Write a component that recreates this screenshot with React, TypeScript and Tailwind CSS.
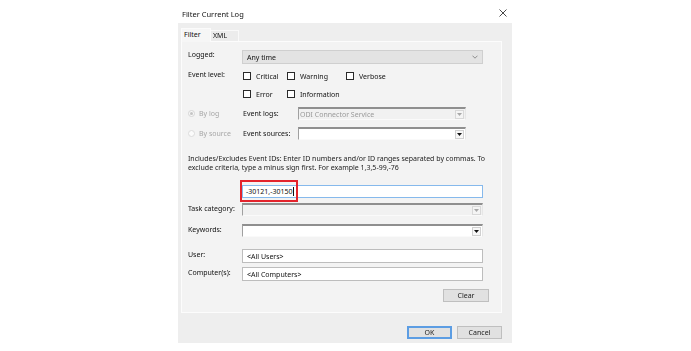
import React from 'react';

const font = "font-['Noto_Sans',sans-serif]";

function Check({ label, w }: { label: string; w: string }) {
  return (
    <div className={`flex items-center ${w}`}>
      <span className="w-[8px] h-[8px] border border-[#2a2a2a] bg-white shrink-0" />
      <span className="ml-[5px] text-[7px] leading-[9px] text-[#111]">{label}</span>
    </div>
  );
}

function Arrow({ disabled }: { disabled?: boolean }) {
  return (
    <span
      className={`w-[9px] h-[9px] mr-[1px] flex items-center justify-center border ${
        disabled ? 'border-[#d8d8d8] bg-[#f4f4f4]' : 'border-[#d0d0d0] bg-[#f7f7f7]'
      }`}
    >
      <svg width="5" height="3" viewBox="0 0 5 3">
        <path d="M0 0H5L2.5 3Z" fill={disabled ? '#a8a8a8' : '#111'} />
      </svg>
    </span>
  );
}

// old style combo box with sunken border
function OldCombo({ w, disabled, text }: { w: string; disabled?: boolean; text?: string }) {
  return (
    <div
      className={`${w} h-[13px] flex items-center justify-between border-t-2 border-l border-t-[#8f8f8f] border-l-[#a0a0a0] border-r border-b border-r-[#e6e6e6] border-b-[#fafafa] ${
        disabled ? 'bg-[#f1f1f1]' : 'bg-white'
      }`}
    >
      <span className="pl-[1px] text-[7px] leading-[9px] text-[#9a9a9a]">{text}</span>
      <Arrow disabled={disabled} />
    </div>
  );
}

function Label({ children, className = '' }: { children: React.ReactNode; className?: string }) {
  return <span className={`w-[54px] shrink-0 text-[7px] leading-[9px] text-[#111] ${className}`}>{children}</span>;
}

function TextBox({ value }: { value: string }) {
  return (
    <div className="w-[241px] h-[14px] bg-white border border-[#bdbdbd] flex items-center pl-[4px]">
      <span className="text-[7px] leading-[9px] text-[#111]">{value}</span>
    </div>
  );
}

function Button({ children, primary, w }: { children: React.ReactNode; primary?: boolean; w: string }) {
  return (
    <div
      className={`${w} h-[13px] flex items-center justify-center bg-[#e1e1e1] text-[7px] leading-[9px] text-[#222] ${
        primary ? 'border-2 border-[#5c9de3]' : 'border border-[#bfbfbf]'
      }`}
    >
      {children}
    </div>
  );
}

export default function App() {
  return (
    <div className={`w-[691px] h-[351px] bg-white overflow-hidden ${font}`}>
      <div className="ml-[178px] w-[334px] blur-[0.3px]">
        {/* Title bar */}
        <div className="h-[23px] pt-[9px] pl-[4px] pr-[5px] flex items-start justify-between">
          <span className="text-[7.5px] leading-[10px] text-[#111]">Filter Current Log</span>
          <svg width="8" height="8" viewBox="0 0 8 8">
            <path d="M0.5 0.5L7.5 7.5M7.5 0.5L0.5 7.5" stroke="#333" strokeWidth="0.9" />
          </svg>
        </div>

        {/* Body */}
        <div className="h-[320px] bg-[#eeeeee] pt-[5px] pl-[3px] pr-[10px]">
          {/* Tabs */}
          <div className="h-[13px] flex items-end">
            <div className="relative z-10 w-[30px] h-[14px] -mb-px bg-[#f6f6f6] border-t border-l border-r border-[#fbfbfb] pl-[2px] pt-[1px] text-[7px] leading-[9px] text-[#111]">
              Filter
            </div>
            <div className="w-[28px] h-[11px] bg-[#ececec] border-t border-r border-[#f9f9f9] pl-[2px] text-[7px] leading-[9px] text-[#111]">
              XML
            </div>
          </div>

          {/* Tab page */}
          <div className="h-[272px] bg-[#f3f3f3] border border-[#fcfcfc] pl-[6px] pt-[8px] flex flex-col">
            {/* Logged */}
            <div className="flex items-start h-[14px]">
              <Label>Logged:</Label>
              <div className="w-[241px] h-[14px] bg-[#e3e3e3] border border-[#cfcfcf] flex items-center justify-between pl-[4px] pr-[4px]">
                <span className="text-[7px] leading-[9px] text-[#111]">Any time</span>
                <svg width="6" height="4" viewBox="0 0 6 4">
                  <path d="M0.5 0.7L3 3.2L5.5 0.7" stroke="#777" strokeWidth="0.8" fill="none" />
                </svg>
              </div>
            </div>

            {/* Event level */}
            <div className="mt-[6px] flex items-start h-[12px]">
              <Label>Event level:</Label>
              <div className="flex items-center h-[12px] pl-[1px]">
                <Check label="Critical" w="w-[44px]" />
                <Check label="Warning" w="w-[59px]" />
                <Check label="Verbose" w="w-[50px]" />
              </div>
            </div>
            <div className="mt-[6px] flex items-center h-[12px] pl-[55px]">
              <Check label="Error" w="w-[44px]" />
              <Check label="Information" w="w-[60px]" />
            </div>

            {/* By log */}
            <div className="mt-[7px] flex items-center h-[13px]">
              <div className="w-[55px] flex items-center">
                <span className="w-[7px] h-[7px] rounded-full border border-[#d6d6d6] bg-[#f7f7f7] flex items-center justify-center">
                  <span className="w-[3px] h-[3px] rounded-full bg-[#c4c4c4]" />
                </span>
                <span className="ml-[4px] text-[7px] leading-[9px] text-[#a6a6a6]">By log</span>
              </div>
              <span className="w-[55px] text-[7px] leading-[9px] text-[#111]">Event logs:</span>
              <OldCombo w="w-[168px]" disabled text="ODI Connector Service" />
            </div>

            {/* By source */}
            <div className="mt-[7px] flex items-center h-[13px]">
              <div className="w-[55px] flex items-center">
                <span className="w-[7px] h-[7px] rounded-full border border-[#dcdcdc] bg-[#fbfbfb]" />
                <span className="ml-[4px] text-[7px] leading-[9px] text-[#a6a6a6]">By source</span>
              </div>
              <span className="w-[55px] text-[7px] leading-[9px] text-[#111]">Event sources:</span>
              <OldCombo w="w-[168px]" />
            </div>

            {/* Description */}
            <div className="mt-[14px] text-[7px] leading-[9px] text-[#222] whitespace-nowrap">
              Includes/Excludes Event IDs: Enter ID numbers and/or ID ranges separated by commas. To
              <br />
              exclude criteria, type a minus sign first. For example 1,3,5-99,-76
            </div>

            {/* Event IDs */}
            <div className="mt-[13px] pl-[54px]">
              <div className="relative w-[241px] h-[13px] bg-white border border-[#86b9ec] flex items-center pl-[3px]">
                <span className="text-[7px] leading-[9px] text-[#111]">-30121,-30150</span>
                <span className="w-[1px] h-[9px] bg-[#111] ml-[0.5px]" />
                <span className="absolute -left-[3px] -top-[6px] w-[58px] h-[22px] border-2 border-[#e3232c]" />
              </div>
            </div>

            {/* Task category */}
            <div className="mt-[5px] flex items-start h-[13px]">
              <Label className="pt-[1px]">Task category:</Label>
              <OldCombo w="w-[241px]" disabled />
            </div>

            {/* Keywords */}
            <div className="mt-[8px] flex items-start h-[13px]">
              <Label className="pt-[1px]">Keywords:</Label>
              <OldCombo w="w-[241px]" />
            </div>

            {/* User */}
            <div className="mt-[12px] flex items-start h-[14px]">
              <Label className="pt-[1px]">User:</Label>
              <TextBox value="<All Users>" />
            </div>

            {/* Computer */}
            <div className="mt-[4px] flex items-start h-[14px]">
              <Label className="pt-[1px]">Computer(s):</Label>
              <TextBox value="<All Computers>" />
            </div>

            <div className="mt-[8px] flex justify-end pr-[12px]">
              <Button w="w-[46px]">Clear</Button>
            </div>
          </div>

          {/* Dialog buttons */}
          <div className="mt-[13px] flex justify-end gap-[5px]">
            <Button w="w-[45px]" primary>
              OK
            </Button>
            <Button w="w-[45px]">Cancel</Button>
          </div>
        </div>
      </div>
    </div>
  );
}
